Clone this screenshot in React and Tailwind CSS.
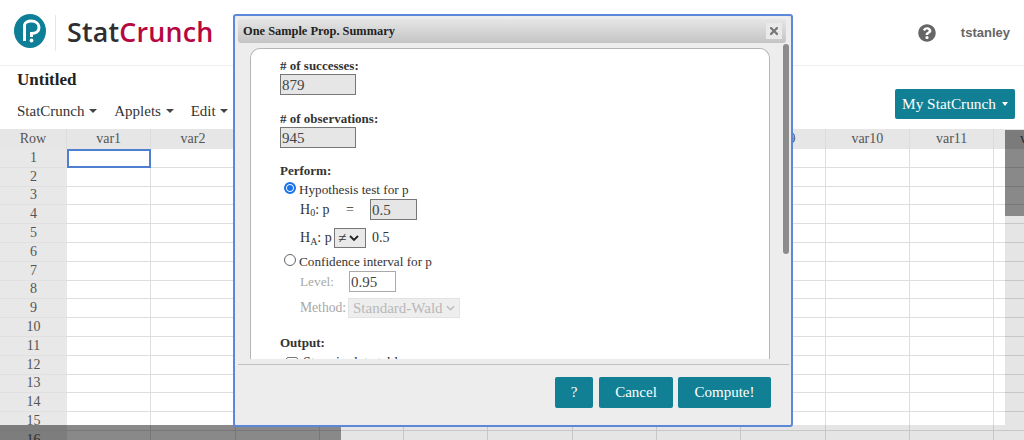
import React from "react";
import { FaQuestionCircle, FaTimes } from "react-icons/fa";

const columns = ["var1", "var2", "var3", "var4", "var5", "var6", "var7", "var8", "var9", "var10", "var11", "var12"];
const rows = Array.from({ length: 16 }, (_, i) => i + 1);

function Caret() {
  return <span className="inline-block ml-[1px] -mt-[3px] border-x-[4px] border-t-[4px] border-x-transparent border-t-[#444] align-middle" />;
}

function Logo() {
  return (
    <div className="flex items-center">
      <svg width="32" height="34" viewBox="0 0 32 34" className="ml-[14px] -mt-[3px]">
        <ellipse cx="16" cy="17" rx="16" ry="17" fill="#0f7f98" />
        <path d="M10.5 27 L10.5 11 C11 8.5 14 7 17 7 C21.8 7 25 9.8 25 13.5 C25 17.5 21.5 19.5 17.5 19.5 L17.5 23" fill="none" stroke="#fff" strokeWidth="3" />
        <circle cx="17.5" cy="26.5" r="1.9" fill="#fff" />
      </svg>
      <div className="w-px h-[36px] bg-[#e6e6e6] ml-[9px] mr-[11px]" />
      <div className="font-['Open_Sans',sans-serif] font-semibold text-[26.8px] leading-none tracking-[0.2px] text-[#2f2f33]">
        Stat<span className="text-[#b5083f]">Crunch</span>
      </div>
    </div>
  );
}

function Sheet() {
  return (
    <div className="grid grid-cols-[67px_repeat(12,84.3px)] text-[14px] text-[#555] leading-none">
      <div className="h-[20px] bg-[#e6e6e6] border-r border-[#dcdcdc] flex items-center justify-center">Row</div>
      {columns.map((c) => (
        <div key={c} className="h-[20px] bg-[#e6e6e6] border-r border-[#dcdcdc] flex items-center justify-center">{c}</div>
      ))}
      {rows.map((r) => (
        <React.Fragment key={r}>
          <div className="h-[18.8px] bg-[#e8e8e8] flex items-center justify-center border-b border-[#e0e0e0]">{r}</div>
          {columns.map((c, i) => (
            <div
              key={c}
              className={
                r === 1 && i === 0
                  ? "h-[18.8px] bg-white border-2 border-[#4f7fd0]"
                  : "h-[18.8px] bg-white border-r border-b border-[#dedede]"
              }
            />
          ))}
        </React.Fragment>
      ))}
    </div>
  );
}

function Readonly({ value, w = "w-[76px]" }) {
  return (
    <div className={w + " h-[21px] bg-[#e6e6e6] border border-[#777] pl-[1px] text-[15px] leading-[21px] text-[#444]"}>{value}</div>
  );
}

function Dialog() {
  return (
    <div className="absolute left-[233px] top-[14px] w-[560px] h-[413px] bg-[#ededed] border-2 border-[#5b88d8] rounded-[3px] font-['Liberation_Serif',serif] text-[#333]">
      <div className="mx-[3px] mt-[3px] h-[24px] w-[548px] rounded-[3px] bg-linear-to-b from-[#e6e6e6] to-[#c4c4c4] flex items-center justify-between pl-[5px] pr-[4px]">
        <span className="font-bold text-[12.4px] text-[#222]">One Sample Prop. Summary</span>
        <span className="w-[16px] h-[16px] bg-[#e9e9e9] flex items-center justify-center text-[#777]">
          <FaTimes size={12} />
        </span>
      </div>
      <div className="ml-[15px] mt-[5px] w-[520px] h-[311px] bg-white border-x border-t border-[#b5b5b5] rounded-t-[10px] overflow-hidden pl-[29px] text-[14px] leading-none">
        <div className="mt-[10px] font-bold text-[13px] h-[15px]"># of successes:</div>
        <Readonly value="879" />
        <div className="mt-[17px] font-bold text-[13px] h-[15px]"># of observations:</div>
        <Readonly value="945" />
        <div className="mt-[16px] font-bold text-[13px] h-[15px]">Perform:</div>
        <div className="mt-[3px] ml-[4px] flex items-center h-[15px] text-[13.2px]">
          <span className="w-[12px] h-[12px] rounded-full border-2 border-[#1a73e8] bg-[#1a73e8] shadow-[inset_0_0_0_1px_#fff] -mt-[4px]" />
          <span className="ml-[3px]">Hypothesis test for p</span>
        </div>
        <div className="mt-[2px] ml-[20px] flex items-center h-[21px]">
          <span className="w-[46px]">H<sub className="text-[10px]">0</sub>: p</span>
          <span className="w-[24px]">=</span>
          <Readonly value="0.5" w="w-[47px]" />
        </div>
        <div className="mt-[8px] ml-[20px] flex items-center h-[20px]">
          <span className="w-[34px]">H<sub className="text-[10px]">A</sub>: p</span>
          <span className="w-[32px] h-[20px] bg-[#e9e9e9] border border-[#777] flex items-center pl-[3px] gap-[3px] text-[15px]">
            ≠
            <svg width="10" height="6" viewBox="0 0 10 6"><path d="M1 1l4 4 4-4" fill="none" stroke="#222" strokeWidth="1.8" /></svg>
          </span>
          <span className="ml-[6px]">0.5</span>
        </div>
        <div className="mt-[6px] ml-[4px] flex items-center h-[15px] text-[13.2px]">
          <span className="w-[12px] h-[12px] rounded-full border border-[#666] bg-white -mt-[4px]" />
          <span className="ml-[3px]">Confidence interval for p</span>
        </div>
        <div className="mt-[2px] ml-[20px] flex items-center h-[21px] text-[#a8a8a8] text-[13.3px]">
          <span className="w-[49px]">Level:</span>
          <div className="w-[47px] h-[21px] bg-white border border-[#aaa] pl-[1px] text-[15px] leading-[20px] text-[#444]">0.95</div>
        </div>
        <div className="mt-[6px] ml-[20px] flex items-center h-[20px] text-[#a8a8a8]">
          <span className="w-[48px] text-[13.6px]">Method:</span>
          <span className="w-[112px] h-[20px] bg-[#eeeeee] border border-[#e2e2e2] flex items-center justify-between pl-[4px] pr-[4px] text-[15px] text-[#b8b8b8]">
            Standard-Wald
            <svg width="9" height="6" viewBox="0 0 10 6"><path d="M1 1l4 4 4-4" fill="none" stroke="#bbb" strokeWidth="1.5" /></svg>
          </span>
        </div>
        <div className="mt-[18px] font-bold text-[13px] h-[15px]">Output:</div>
        <div className="mt-[4px] ml-[6px] flex items-center h-[15px]">
          <span className="w-[12px] h-[12px] rounded-[2px] border border-[#777] bg-white" />
          <span className="ml-[5px]">Store in data table</span>
        </div>
      </div>
      <div className="absolute left-[548px] top-[28px] w-[6px] h-[210px] bg-[#8c8c8c] rounded-[3px]" />
      <div className="mt-[5px] mx-[3px] w-[551px] border-t border-[#c0c0c0]" />
      <div className="mt-[12px] flex justify-end gap-[5px] pr-[20px] text-[15px] text-white">
        <button className="w-[38px] h-[31px] mr-[1px] bg-[#118094] rounded-[2px]">?</button>
        <button className="w-[74px] h-[31px] bg-[#118094] rounded-[2px]">Cancel</button>
        <button className="w-[93px] h-[31px] bg-[#118094] rounded-[2px]">Compute!</button>
      </div>
    </div>
  );
}

export default function App() {
  return (
    <div className="relative w-[1024px] h-[440px] overflow-hidden bg-white font-['Liberation_Serif',serif] text-[#333]">
      <header className="h-[66px] border-b border-[#eeeeee] flex items-center justify-between pr-[14px]">
        <Logo />
        <div className="flex items-center gap-[25px] font-['Liberation_Sans',sans-serif] font-bold text-[13px] text-[#666]">
          <FaQuestionCircle size={18} className="text-[#666]" />
          <span>tstanley</span>
        </div>
      </header>
      <div className="h-[63px] flex justify-between pl-[17px] pr-[9px]">
        <div>
          <h1 className="mt-[4px] text-[17px] leading-[20px] font-bold text-[#222]">Untitled</h1>
          <nav className="mt-[12px] flex gap-[17px] text-[15px] leading-[18px] text-[#333]">
            <span>StatCrunch <Caret /></span>
            <span>Applets <Caret /></span>
            <span>Edit <Caret /></span>
          </nav>
        </div>
        <button className="mt-[23px] w-[120px] h-[30px] bg-[#118094] rounded-[2px] text-white text-[15.3px] flex items-center justify-center gap-[6px]">
          My StatCrunch
          <span className="inline-block border-x-[3px] border-t-[4px] border-x-transparent border-t-white" />
        </button>
      </div>
      <Sheet />
      <div className="absolute left-[1005px] top-[130px] w-[19px] h-[295px] bg-black/10">
        <div className="h-[86px] bg-black/40" />
      </div>
      <div className="absolute left-0 top-[425px] w-[1024px] h-[15px] bg-black/10">
        <div className="w-[341px] h-[15px] bg-black/40" />
      </div>
      <Dialog />
    </div>
  );
}
